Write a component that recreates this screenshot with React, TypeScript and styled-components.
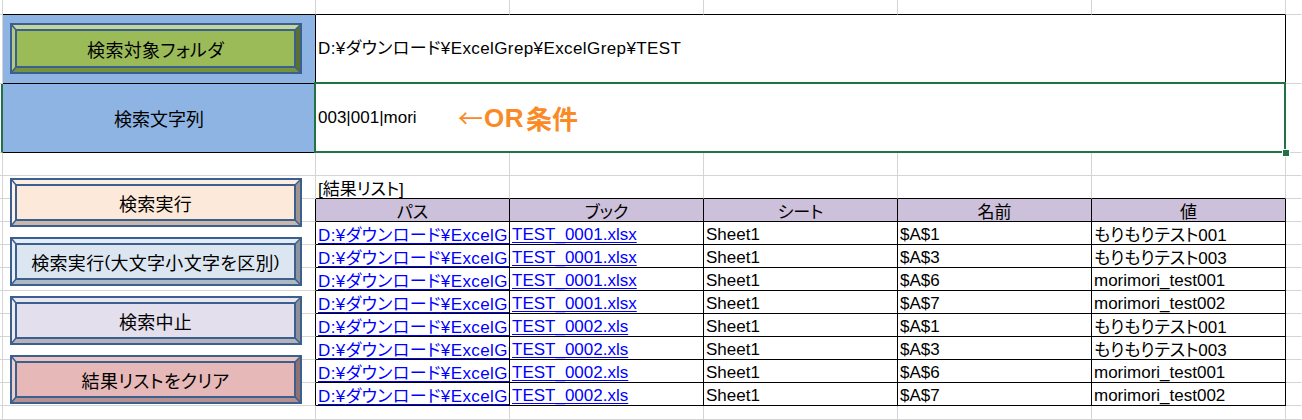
import React from 'react';
import styled, { createGlobalStyle, css } from 'styled-components';

const GRID = '#d4d4d4';
const INK = '#000000';
const PICK = '#217346';
const EDGE = '#3b5f8f';
const LINK = '#0000ff';
const LABEL_BG = '#8db4e2';
const HEAD_BG = '#ccc0da';

type Tone = { face: string; top: string; left: string; bottom: string; right: string };

const TONES: Record<string, Tone> = {
  green: { face: '#9bbb59', top: '#c3d69b', left: '#b3ca7f', bottom: '#76923c', right: '#5a7030' },
  peach: { face: '#fde9d9', top: '#fdeee3', left: '#fdf2ea', bottom: '#c9b9ad', right: '#9f958e' },
  blue: { face: '#dce6f1', top: '#e4ecf5', left: '#e9eff7', bottom: '#b0b8c1', right: '#8d949b' },
  lavender: { face: '#e4dfec', top: '#eae6f0', left: '#eeebf3', bottom: '#b6b2bd', right: '#918e96' },
  pink: { face: '#e6b8b7', top: '#ebc5c4', left: '#efcfce', bottom: '#b69190', right: '#8e7170' },
};

const GlobalStyle = createGlobalStyle`
  html, body {
    margin: 0;
    padding: 0;
    background: #fff;
  }
  body {
    width: 1302px;
    height: 420px;
    overflow: hidden;
    font-family: "Liberation Sans", "Noto Sans CJK JP", sans-serif;
    font-size: 17px;
    color: ${INK};
  }
`;

const Sheet = styled.div`
  display: grid;
  grid-template-columns: 3px 313px repeat(5, 194px) 1fr;
  grid-template-rows: 15px 69px 69px repeat(11, 23px) 1fr;
  width: 1302px;
  height: 420px;
`;

type Variant = 'text' | 'center' | 'middle' | 'title' | 'slot' | 'stub';

const variants: Record<Variant, ReturnType<typeof css>> = {
  text: css`
    padding: 3px 2px 0;
    line-height: 19px;
  `,
  center: css`
    padding: 3px 0 0;
    line-height: 19px;
    text-align: center;
  `,
  middle: css`
    display: flex;
    align-items: center;
    padding-left: 2px;
    line-height: 22px;
  `,
  title: css`
    display: flex;
    align-items: center;
    justify-content: center;
    line-height: 22px;
  `,
  slot: css`
    display: flex;
    padding: 8px 0 0 7px;
  `,
  stub: css`
    padding: 0;
  `,
};

const Cell = styled.div<{
  $row: number;
  $col: number;
  $span?: number;
  $right?: string;
  $rightW?: number;
  $bottom?: string;
  $bg?: string;
  $variant?: Variant;
  $picked?: boolean;
}>`
  grid-row: ${(p) => p.$row};
  grid-column: ${(p) => p.$col} / span ${(p) => p.$span ?? 1};
  box-sizing: border-box;
  min-width: 0;
  border-right: ${(p) => p.$rightW ?? 1}px solid ${(p) => p.$right ?? GRID};
  border-bottom: 1px solid ${(p) => p.$bottom ?? GRID};
  background: ${(p) => p.$bg ?? '#fff'};
  white-space: nowrap;
  overflow: ${(p) => (p.$picked ? 'visible' : 'hidden')};
  position: ${(p) => (p.$picked ? 'relative' : 'static')};
  ${(p) => variants[p.$variant ?? 'text']}
`;

const Selection = styled.span`
  position: absolute;
  top: -2px;
  left: -2px;
  right: -1px;
  bottom: -1px;
  border: 2px solid ${PICK};
  pointer-events: none;
  z-index: 2;
`;

const FillHandle = styled.span`
  position: absolute;
  right: -4px;
  bottom: -4px;
  width: 6px;
  height: 6px;
  background: ${PICK};
  box-shadow: 0 0 0 1px #fff;
  z-index: 3;
`;

const Ja = styled.span<{ $size?: number }>`
  font-family: "Noto Sans CJK JP", sans-serif;
  font-size: ${(p) => p.$size ?? 17}px;
  font-feature-settings: "palt";
  line-height: 1;
`;

const Link = styled.span`
  color: ${LINK};
  text-decoration: underline;
  text-decoration-skip-ink: none;
  text-underline-offset: 2px;
`;

const PathText = styled.span`
  letter-spacing: 0.4px;
`;

const QueryValue = styled.span`
  display: inline-block;
  min-width: 140px;
`;

const OrNote = styled.span`
  display: flex;
  align-items: center;
  margin-top: -1px;
  font-family: "Liberation Sans", "Noto Sans CJK JP", sans-serif;
  font-weight: bold;
  font-size: 26px;
  line-height: 1;
  color: #fa8a25;
`;

const Arrow = styled.span`
  font-family: "Noto Sans CJK JP", sans-serif;
  font-weight: normal;
  font-size: 25px;
  margin-right: 1px;
`;

const OrWord = styled.span`
  letter-spacing: 0.5px;
  margin-right: 2px;
`;

const ButtonStack = styled.div`
  grid-row: 5 / 15;
  grid-column: 2;
  display: flex;
  flex-direction: column;
  gap: 10px;
  padding: 2px 0 0 7px;
  z-index: 1;
`;

const ButtonFrame = styled.div<{ $h: number }>`
  position: relative;
  box-sizing: border-box;
  flex-shrink: 0;
  display: flex;
  width: 292px;
  height: ${(p) => p.$h}px;
  border: 2px solid ${EDGE};
`;

const Bevel = styled.div<{ $tone: Tone }>`
  flex: 1;
  display: flex;
  min-width: 0;
  border-style: solid;
  border-width: 4px 4px 4px 3px;
  border-color: ${(p) => `${p.$tone.top} ${p.$tone.right} ${p.$tone.bottom} ${p.$tone.left}`};
`;

const Face = styled.div<{ $tone: Tone }>`
  flex: 1;
  display: flex;
  align-items: center;
  justify-content: center;
  border: 2px solid ${EDGE};
  background: ${(p) => p.$tone.face};
  white-space: nowrap;
  line-height: 22px;
  letter-spacing: 0.3px;
`;

const Corners = styled.svg`
  position: absolute;
  left: -2px;
  top: -2px;
  pointer-events: none;
`;

const CJK = /([\u3000-\u30ff\u4e00-\u9fff\uff01-\uff60]+)/;

const Txt = ({ text, size }: { text: string; size?: number }) => (
  <>
    {text.split(CJK).map((part, i) =>
      i % 2 ? (
        <Ja key={i} $size={size}>
          {part}
        </Ja>
      ) : (
        <React.Fragment key={i}>{part}</React.Fragment>
      ),
    )}
  </>
);

const MacroButton = ({ label, tone, height }: { label: string; tone: Tone; height: number }) => {
  const w = 292;
  const h = height;
  return (
    <ButtonFrame $h={h}>
      <Bevel $tone={tone}>
        <Face $tone={tone}>
          <Txt text={label} size={18} />
        </Face>
      </Bevel>
      <Corners width={w} height={h} viewBox={`0 0 ${w} ${h}`}>
        <g stroke={EDGE} strokeWidth={1.5}>
          <line x1={1} y1={1} x2={6} y2={7} />
          <line x1={w - 1} y1={1} x2={w - 7} y2={7} />
          <line x1={1} y1={h - 1} x2={6} y2={h - 7} />
          <line x1={w - 1} y1={h - 1} x2={w - 7} y2={h - 7} />
        </g>
      </Corners>
    </ButtonFrame>
  );
};

const PATH = 'D:¥ダウンロード¥ExcelGrep¥ExcelGrep¥TEST';

const HEADERS = ['パス', 'ブック', 'シート', '名前', '値'];

const RESULTS = [
  ['TEST_0001.xlsx', 'Sheet1', '$A$1', 'もりもりテスト001'],
  ['TEST_0001.xlsx', 'Sheet1', '$A$3', 'もりもりテスト003'],
  ['TEST_0001.xlsx', 'Sheet1', '$A$6', 'morimori_test001'],
  ['TEST_0001.xlsx', 'Sheet1', '$A$7', 'morimori_test002'],
  ['TEST_0002.xls', 'Sheet1', '$A$1', 'もりもりテスト001'],
  ['TEST_0002.xls', 'Sheet1', '$A$3', 'もりもりテスト003'],
  ['TEST_0002.xls', 'Sheet1', '$A$6', 'morimori_test001'],
  ['TEST_0002.xls', 'Sheet1', '$A$7', 'morimori_test002'],
];

const ACTIONS: { label: string; tone: Tone }[] = [
  { label: '検索実行', tone: TONES.peach },
  { label: '検索実行(大文字小文字を区別)', tone: TONES.blue },
  { label: '検索中止', tone: TONES.lavender },
  { label: '結果リストをクリア', tone: TONES.pink },
];

const buildCells = () => {
  const cells: React.ReactNode[] = [];
  for (let r = 1; r <= 15; r++) {
    for (let c = 1; c <= 8; c++) {
      const key = `${r}-${c}`;

      // what is left of the row headers
      if (c === 1) {
        cells.push(
          <Cell
            key={key}
            $row={r}
            $col={c}
            $variant="stub"
            $right={r === 3 ? PICK : undefined}
            $rightW={r === 3 ? 2 : 1}
          />,
        );
        continue;
      }

      if (r === 2 || r === 3) {
        if (c === 2) {
          cells.push(
            <Cell
              key={key}
              $row={r}
              $col={c}
              $bg={LABEL_BG}
              $right={INK}
              $bottom={INK}
              $variant={r === 2 ? 'slot' : 'title'}
            >
              {r === 2 ? (
                <MacroButton label="検索対象フォルダ" tone={TONES.green} height={51} />
              ) : (
                <Txt text="検索文字列" size={18} />
              )}
            </Cell>,
          );
          continue;
        }
        if (c === 3) {
          cells.push(
            <Cell
              key={key}
              $row={r}
              $col={c}
              $span={5}
              $right={INK}
              $bottom={INK}
              $variant="middle"
              $picked={r === 3}
            >
              {r === 2 ? (
                <PathText>
                  <Txt text={PATH} />
                </PathText>
              ) : (
                <>
                  <QueryValue>003|001|mori</QueryValue>
                  <OrNote>
                    <Arrow>←</Arrow>
                    <OrWord>OR</OrWord>
                    <Ja $size={26}>条件</Ja>
                  </OrNote>
                  <Selection />
                  <FillHandle />
                </>
              )}
            </Cell>,
          );
          continue;
        }
        if (c < 8) continue;
      }

      const tableCol = c >= 3 && c <= 7;
      const tableRow = r >= 6 && r <= 14;

      if (tableRow && tableCol) {
        const isHead = r === 6;
        const data = RESULTS[r - 7];
        let content: React.ReactNode = null;
        if (isHead) {
          content = <Txt text={HEADERS[c - 3]} />;
        } else if (c === 3) {
          content = (
            <Link>
              <PathText>
                <Txt text={`${PATH}¥${data[0]}`} />
              </PathText>
            </Link>
          );
        } else if (c === 4) {
          content = (
            <Link>
              <Txt text={data[0]} />
            </Link>
          );
        } else {
          content = <Txt text={data[c - 4]} />;
        }
        cells.push(
          <Cell
            key={key}
            $row={r}
            $col={c}
            $right={INK}
            $bottom={INK}
            $bg={isHead ? HEAD_BG : undefined}
            $variant={isHead ? 'center' : 'text'}
          >
            {content}
          </Cell>,
        );
        continue;
      }

      cells.push(
        <Cell
          key={key}
          $row={r}
          $col={c}
          $right={c === 2 && tableRow ? INK : c === 8 ? 'transparent' : undefined}
          $bottom={(r === 1 && c <= 7) || (r === 5 && tableCol) ? INK : undefined}
        >
          {r === 5 && c === 3 ? <Txt text="[結果リスト]" /> : null}
        </Cell>,
      );
    }
  }
  return cells;
};

export default function App() {
  return (
    <>
      <GlobalStyle />
      <Sheet>
        {buildCells()}
        <ButtonStack>
          {ACTIONS.map((a) => (
            <MacroButton key={a.label} label={a.label} tone={a.tone} height={49} />
          ))}
        </ButtonStack>
      </Sheet>
    </>
  );
}
